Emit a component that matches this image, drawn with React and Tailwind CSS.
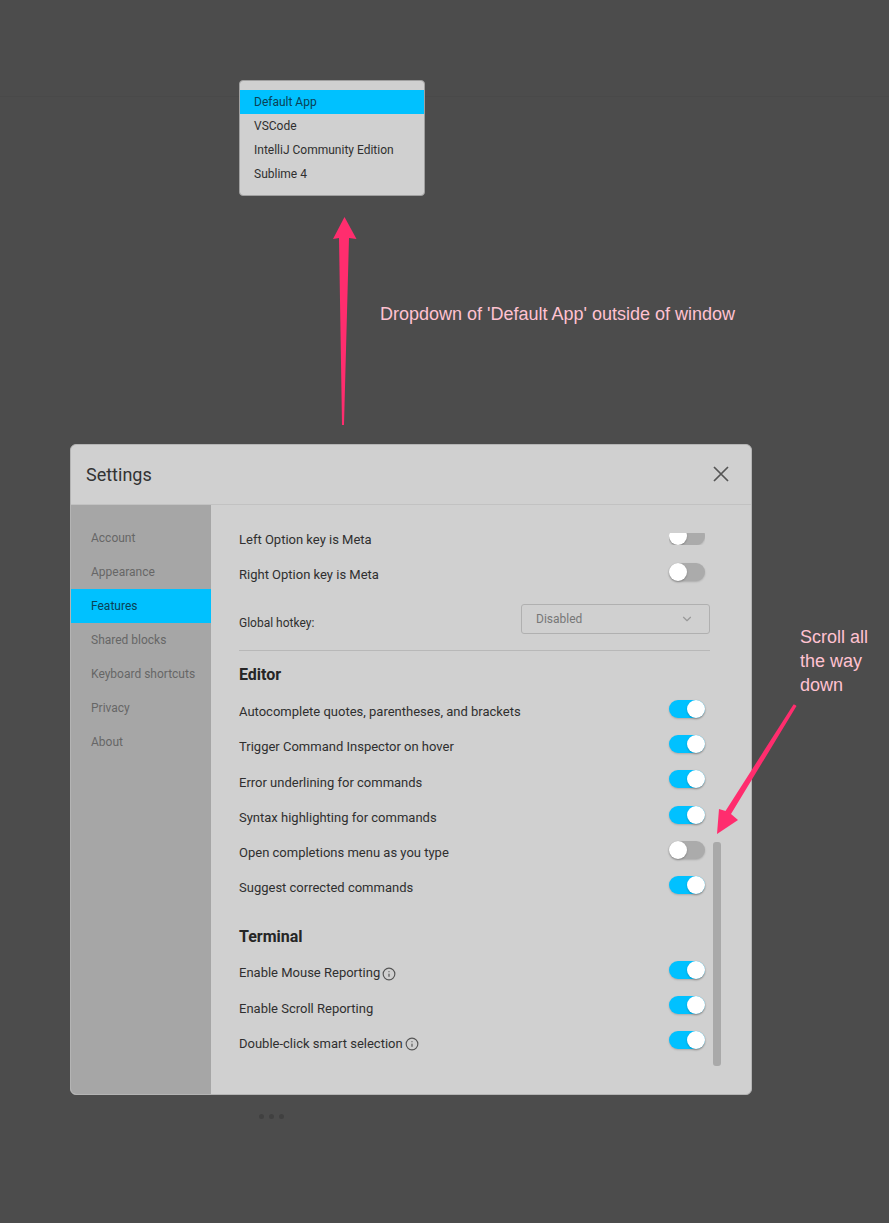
import React from 'react';
import { ChevronDown, Info } from 'lucide-react';

const sidebarItems = ['Account', 'Appearance', 'Features', 'Shared blocks', 'Keyboard shortcuts', 'Privacy', 'About'];
const menuItems = ['Default App', 'VSCode', 'IntelliJ Community Edition', 'Sublime 4'];

const editorRows = [
  { label: 'Autocomplete quotes, parentheses, and brackets', on: true },
  { label: 'Trigger Command Inspector on hover', on: true },
  { label: 'Error underlining for commands', on: true },
  { label: 'Syntax highlighting for commands', on: true },
  { label: 'Open completions menu as you type', on: false },
  { label: 'Suggest corrected commands', on: true },
];

const terminalRows = [
  { label: 'Enable Mouse Reporting', on: true, info: true },
  { label: 'Enable Scroll Reporting', on: true },
  { label: 'Double-click smart selection', on: true, info: true },
];

const Switch = ({ on }) => (
  <div className={`flex h-[18px] w-[36px] rounded-full shadow-[0_1px_2px_rgba(0,0,0,0.18)] ${on ? 'justify-end bg-[#00c1ff]' : 'justify-start bg-[#ababab]'}`}>
    <div className="h-[18px] w-[18px] rounded-full bg-white shadow-[0_1px_2px_rgba(0,0,0,0.25)]" />
  </div>
);

const Row = ({ label, on, info }) => (
  <div className="flex h-[35.2px] items-center justify-between pr-[5px]">
    <div className="flex items-center gap-[2px]">
      <span>{label}</span>
      {info && <Info size={14} strokeWidth={2} className="mt-[2px] text-[#555555]" />}
    </div>
    <div className="mb-[6px]">
      <Switch on={on} />
    </div>
  </div>
);

const Annotations = () => (
  <>
    <svg className="absolute left-0 top-0" width="889" height="1223" viewBox="0 0 889 1223" fill="none">
      <path d="M344.5 217 L356.5 239 L349 238 L344 425 L342 425 L339 238 L333 239 Z" fill="#ff2d6e" />
      <path d="M793.5 704.5 Q795 704 796.5 706 L731 814 L738 820 L717 834 L719 809 L725.5 811 Z" fill="#ff2d6e" />
    </svg>
    <div className="absolute left-[380px] top-[303px] text-[18px] leading-[22px] text-[#ffc2d1] font-['Liberation_Sans',sans-serif]">
      Dropdown of 'Default App' outside of window
    </div>
    <div className="absolute left-[800px] top-[625px] w-[80px] text-[18px] leading-[24px] text-[#ffc2d1] font-['Liberation_Sans',sans-serif]">
      Scroll all the way down
    </div>
  </>
);

const App = () => {
  return (
    <div className="relative h-[1223px] w-full overflow-hidden bg-[#4c4c4c] pt-[80px] font-['Roboto',sans-serif] text-[#2f2f2f]">
      <div className="absolute left-0 right-0 top-[96px] h-px bg-[#494949]" />

      {/* Dropdown */}
      <div className="relative ml-[239px] w-[186px] rounded-[4px] border border-[#a0a0a0] bg-[#d0d0d0] py-[9px] text-[12px]">
        {menuItems.map((item, i) => (
          <div key={item} className={`flex h-[24px] items-center pl-[14px] ${i === 0 ? 'bg-[#00c1ff] text-[#0a4256]' : ''}`}>
            {item}
          </div>
        ))}
      </div>

      {/* Settings modal */}
      <div className="relative ml-[70px] mt-[248px] h-[651px] w-[682px] overflow-hidden rounded-[6px] border border-[#b4b4b4] bg-[#d0d0d0]">
        <div className="flex h-[60px] items-center justify-between border-b border-[#c2c2c2] pl-[15px] pr-[22px]">
          <span className="mb-[1px] text-[18px] text-[#333333]">Settings</span>
          <svg width="16" height="16" viewBox="0 0 16 16" fill="none" stroke="#555555" strokeWidth="1.7" className="mb-[1px]">
            <path d="M1 1 L15 15 M15 1 L1 15" />
          </svg>
        </div>
        <div className="flex h-[590px]">
          <div className="w-[140px] bg-[#a6a6a6] pt-[16px] text-[12px]">
            {sidebarItems.map(item => (
              <div key={item} className={`flex h-[34px] items-center pl-[20px] ${item === 'Features' ? 'bg-[#00c1ff] text-[#0a4256]' : 'text-[#666666]'}`}>
                {item}
              </div>
            ))}
          </div>
          <div className="relative flex-1 pl-[28px] pr-[41px] pt-[17.4px] text-[13px]">
            <div className="flex h-[35.2px] items-center justify-between pr-[5px]">
              <span>Left Option key is Meta</span>
              <div className="mb-[1px] h-[12px] overflow-hidden">
                <div className="-mt-[6px]">
                  <Switch on={false} />
                </div>
              </div>
            </div>
            <Row label="Right Option key is Meta" on={false} />

            <div className="mt-[11px] flex h-[30px] justify-between">
              <span className="pt-[11px] text-[12px] leading-[16px]">Global hotkey:</span>
              <div className="flex w-[189px] items-center justify-between rounded-[3px] border border-[#b0b0b0] pl-[14px] pr-[15px] text-[12px] text-[#777777]">
                <span>Disabled</span>
                <ChevronDown size={14} strokeWidth={2} className="text-[#999999]" />
              </div>
            </div>

            <div className="mt-[16px] h-px bg-[#b8b8b8]" />

            <h2 className="mt-[12px] h-[24px] text-[16px] font-bold leading-[24px] text-[#262626]">Editor</h2>
            <div className="mt-[7.6px]">
              {editorRows.map(row => <Row key={row.label} {...row} />)}
            </div>

            <h2 className="mt-[19.2px] h-[24px] text-[16px] font-bold leading-[24px] text-[#262626]">Terminal</h2>
            <div className="mt-[6.8px]">
              {terminalRows.map(row => <Row key={row.label} {...row} />)}
            </div>

            {/* Scrollbar thumb */}
            <div className="absolute right-[30px] top-[337px] h-[224px] w-[8px] rounded-[3px] bg-[#a9a9a9]" />
          </div>
        </div>
      </div>

      {/* Dots under the window */}
      <div className="ml-[259px] mt-[19px] flex gap-[5px]">
        <div className="h-[5px] w-[5px] rounded-full bg-[#404040]" />
        <div className="h-[5px] w-[5px] rounded-full bg-[#404040]" />
        <div className="h-[5px] w-[5px] rounded-full bg-[#404040]" />
      </div>

      <Annotations />
    </div>
  );
};

export default App;
